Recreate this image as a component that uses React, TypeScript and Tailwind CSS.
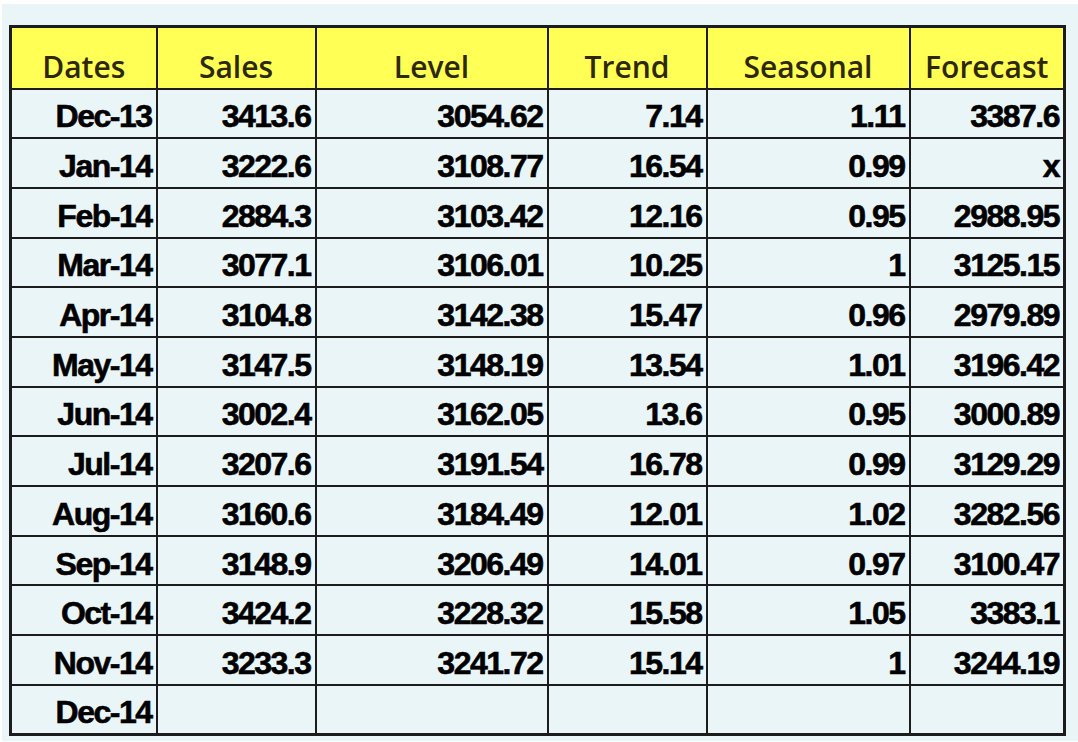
import React from "react";

const rows: string[][] = [
  ["Dec-13", "3413.6", "3054.62", "7.14", "1.11", "3387.6"],
  ["Jan-14", "3222.6", "3108.77", "16.54", "0.99", "x"],
  ["Feb-14", "2884.3", "3103.42", "12.16", "0.95", "2988.95"],
  ["Mar-14", "3077.1", "3106.01", "10.25", "1", "3125.15"],
  ["Apr-14", "3104.8", "3142.38", "15.47", "0.96", "2979.89"],
  ["May-14", "3147.5", "3148.19", "13.54", "1.01", "3196.42"],
  ["Jun-14", "3002.4", "3162.05", "13.6", "0.95", "3000.89"],
  ["Jul-14", "3207.6", "3191.54", "16.78", "0.99", "3129.29"],
  ["Aug-14", "3160.6", "3184.49", "12.01", "1.02", "3282.56"],
  ["Sep-14", "3148.9", "3206.49", "14.01", "0.97", "3100.47"],
  ["Oct-14", "3424.2", "3228.32", "15.58", "1.05", "3383.1"],
  ["Nov-14", "3233.3", "3241.72", "15.14", "1", "3244.19"],
  ["Dec-14", "", "", "", "", ""],
];

const headers = ["Dates", "Sales", "Level", "Trend", "Seasonal", "Forecast"];
const widths = ["w-[146px]", "w-[159px]", "w-[232px]", "w-[159px]", "w-[203px]", "w-[155px]"];

export default function App() {
  return (
    <div className="w-[1078px] h-[742px] bg-white overflow-hidden">
      <div className="ml-[2px] mt-[4px] w-[1076px] h-[737px] bg-[#eaf5f8] pl-[7px] pt-[21px]">
        <table className="border-collapse border-[3px] border-[#1c1c1c] table-fixed">
          <thead>
            <tr className="h-[62px] bg-[#ffff55]">
              {headers.map((h, i) => (
                <th
                  key={h}
                  className={`${widths[i]} border-2 border-[#1c1c1c] align-bottom pb-[6px] text-center font-semibold text-[30px] leading-none text-[#2e2800] [font-family:'Open_Sans',sans-serif]`}
                >
                  {h}
                </th>
              ))}
            </tr>
          </thead>
          <tbody>
            {rows.map((r, ri) => (
              <tr key={ri} className="h-[49.7px]">
                {r.map((c, ci) => (
                  <td
                    key={ci}
                    className="border-2 border-[#1c1c1c] text-right align-middle pr-[4px] pt-[6px] font-bold text-[32px] leading-none tracking-[-1.5px] text-black [-webkit-text-stroke:0.6px_#000] [font-family:'Liberation_Sans',sans-serif]"
                  >
                    {c}
                  </td>
                ))}
              </tr>
            ))}
          </tbody>
        </table>
      </div>
    </div>
  );
}
